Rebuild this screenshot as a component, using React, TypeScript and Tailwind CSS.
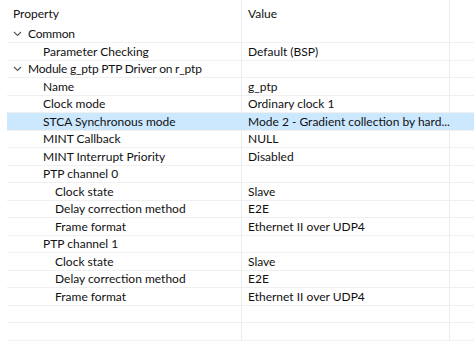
import React from 'react';

type Row = { label: string; value?: string; level: number; expand?: boolean; selected?: boolean };

const rows: Row[] = [
  { label: 'Common', level: 0, expand: true },
  { label: 'Parameter Checking', value: 'Default (BSP)', level: 1 },
  { label: 'Module g_ptp PTP Driver on r_ptp', level: 0, expand: true },
  { label: 'Name', value: 'g_ptp', level: 1 },
  { label: 'Clock mode', value: 'Ordinary clock 1', level: 1 },
  { label: 'STCA Synchronous mode', value: 'Mode 2 - Gradient collection by hard...', level: 1, selected: true },
  { label: 'MINT Callback', value: 'NULL', level: 1 },
  { label: 'MINT Interrupt Priority', value: 'Disabled', level: 1 },
  { label: 'PTP channel 0', level: 1 },
  { label: 'Clock state', value: 'Slave', level: 2 },
  { label: 'Delay correction method', value: 'E2E', level: 2 },
  { label: 'Frame format', value: 'Ethernet II over UDP4', level: 2 },
  { label: 'PTP channel 1', level: 1 },
  { label: 'Clock state', value: 'Slave', level: 2 },
  { label: 'Delay correction method', value: 'E2E', level: 2 },
  { label: 'Frame format', value: 'Ethernet II over UDP4', level: 2 },
  { label: '', level: 0 },
  { label: '', level: 0 },
];

const indent = ['pl-[6px]', 'pl-[36px]', 'pl-[48px]'];

const Chevron = () => (
  <svg width="9" height="6" viewBox="0 0 9 6" className="mr-[6px] shrink-0">
    <path d="M1 1 L4.5 4.5 L8 1" fill="none" stroke="#555" strokeWidth="1.1" />
  </svg>
);

const App = () => {
  return (
    <div
      className="w-[474px] h-[343px] bg-white overflow-hidden text-[12px] text-[#111]"
      style={{ fontFamily: '"Segoe UI", Lato, sans-serif' }}
    >
      {/* Header */}
      <div className="flex h-[25.5px] ml-[7px]">
        <div className="w-[235px] border-r border-[#ececec] flex items-center pl-[6px] pt-[3px]">Property</div>
        <div className="w-[208px] border-r border-[#ececec] flex items-center pl-[6px] pt-[3px]">Value</div>
        <div className="flex-1" />
      </div>

      {rows.map((r, i) => (
        <div
          key={i}
          className={`flex h-[17.5px] ml-[7px] border-b border-[#f0f0f0] ${r.selected ? 'bg-[#cce8ff]' : ''}`}
        >
          <div
            className={`w-[235px] flex items-center whitespace-nowrap pt-[1px] ${indent[r.level]} ${
              r.selected ? '' : 'border-r border-[#ececec]'
            }`}
          >
            {r.expand && <Chevron />}
            {r.level === 0 && r.expand ? <span className="tracking-[-0.2px]">{r.label}</span> : r.label}
          </div>
          <div
            className={`w-[208px] flex items-center pl-[6px] pt-[1px] whitespace-nowrap ${
              r.selected ? '' : 'border-r border-[#ececec]'
            }`}
          >
            {r.value}
          </div>
          <div className="flex-1" />
        </div>
      ))}
    </div>
  );
};

export default App;
